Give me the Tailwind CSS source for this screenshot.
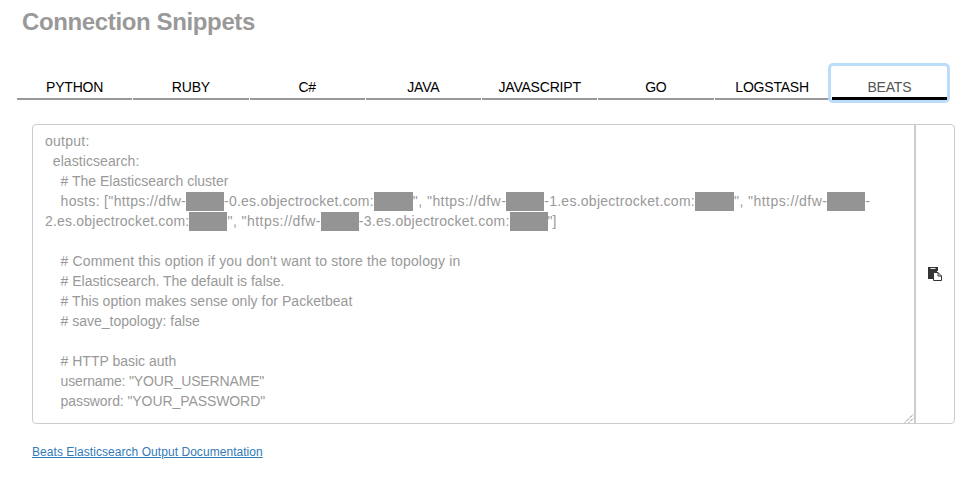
<!DOCTYPE html>
<html>
<head>
<meta charset="utf-8">
<script src="https://cdn.jsdelivr.net/npm/@tailwindcss/browser@4"></script>
</head>
<body class="bg-white font-['Liberation_Sans',Arial,sans-serif]">
<div class="w-[965px] h-[477px] overflow-hidden relative">
  <h1 class="pl-[22px] pt-[9px] h-[66px] text-[24px] leading-[26px] font-bold tracking-[-0.37px] text-[#999999]">Connection Snippets</h1>
  <div class="flex ml-[17px] w-[930px] h-[34px] mt-[-1px] text-[14px] leading-[20px] tracking-[-0.2px] text-black">
    <div class="flex-1 h-[34px] pt-[12px] text-center"><div class="border-b-2 border-[#999999] mr-px h-[23px]">PYTHON</div></div>
    <div class="flex-1 h-[34px] pt-[12px] text-center"><div class="border-b-2 border-[#999999] mr-px h-[23px]">RUBY</div></div>
    <div class="flex-1 h-[34px] pt-[12px] text-center"><div class="border-b-2 border-[#999999] mr-px h-[23px]">C#</div></div>
    <div class="flex-1 h-[34px] pt-[12px] text-center"><div class="border-b-2 border-[#999999] mr-px h-[23px]">JAVA</div></div>
    <div class="flex-1 h-[34px] pt-[12px] text-center"><div class="border-b-2 border-[#999999] mr-px h-[23px]">JAVASCRIPT</div></div>
    <div class="flex-1 h-[34px] pt-[12px] text-center"><div class="border-b-2 border-[#999999] mr-px h-[23px]">GO</div></div>
    <div class="flex-1 h-[34px] pt-[12px] text-center"><div class="border-b-2 border-[#999999] mr-px h-[23px]">LOGSTASH</div></div>
    <div class="flex-1 h-[34px] pt-[12px] text-center relative">
      <div class="absolute left-[-3px] top-[-2px] w-[122px] h-[40px] rounded-[5px] border-[3px] border-[#bcdcfb]"></div>
      <div class="relative border-b-[3px] border-black h-[23px] text-[#555555] ml-[1px]">BEATS</div>
    </div>
  </div>
  <div class="ml-[32px] mt-[25px] w-[923px] h-[300px] flex border border-[#cccccc] rounded-[4px]">
    <div class="relative w-[883px] h-full border-r-2 border-[#cccccc] pl-[12px] pr-[12px] pt-[6px] text-[14px] leading-[20px] text-[#999999] whitespace-pre-wrap"><span class="tracking-[0.25px]">output:</span>
  <span class="tracking-[0.07px]">elasticsearch:</span>
    # The Elasticsearch cluster
    <span class="tracking-[0.33px]">hosts: ["https://dfw-</span><span class="inline-block w-[38px] h-[19px] align-[-5px] bg-[#949494]"></span><span class="tracking-[0.22px]">-0.es.objectrocket.com:</span><span class="inline-block w-[39px] h-[19px] align-[-5px] bg-[#949494]"></span><span class="tracking-[0.45px]">", "https://dfw-</span><span class="inline-block w-[38px] h-[19px] align-[-5px] bg-[#949494]"></span><span class="tracking-[0.26px]">-1.es.objectrocket.com:</span><span class="inline-block w-[39px] h-[19px] align-[-5px] bg-[#949494]"></span><span class="tracking-[0.45px]">", "https://dfw-</span><span class="inline-block w-[38px] h-[19px] align-[-5px] bg-[#949494]"></span>-
<span class="tracking-[0.2px]">2.es.objectrocket.com:</span><span class="inline-block w-[38px] h-[19px] align-[-5px] bg-[#949494]"></span><span class="tracking-[0.45px]">", "https://dfw-</span><span class="inline-block w-[38px] h-[19px] align-[-5px] bg-[#949494]"></span><span class="tracking-[0.26px]">-3.es.objectrocket.com:</span><span class="inline-block w-[38px] h-[19px] align-[-5px] bg-[#949494]"></span>"]

    <span class="tracking-[0.15px]"># Comment this option if you don't want to store the topology in</span>
    # Elasticsearch. The default is false.
    <span class="tracking-[0.04px]"># This option makes sense only for Packetbeat</span>
    # save_topology: false

    # HTTP basic auth
    <span class="tracking-[-0.16px]">username: "YOUR_USERNAME"</span>
    <span class="tracking-[-0.08px]">password: "YOUR_PASSWORD"</span><svg class="absolute right-0 bottom-0 w-[10px] h-[10px]" viewBox="0 0 10 10"><path d="M1 9.5L9.5 1M5 9.5L9.5 5" stroke="#444444" stroke-width="1" stroke-dasharray="1 1" fill="none"/></svg></div>
    <div class="flex-1 flex items-center justify-center">
      <svg class="w-[14px] h-[14px]" viewBox="0 0 14 14"><path d="M0 0H10V4L9 4V5H7V12H0Z" fill="#333333"/><rect x="2.5" y="1" width="5" height="1" fill="#eeeeee"/><path d="M5.5 5.5H10L13.5 9V13.5H5.5Z" fill="#fff" stroke="#333333"/><path d="M10 5.5V9H13.5" fill="none" stroke="#333333"/></svg>
    </div>
  </div>
  <a class="block ml-[32px] mt-[20px] text-[12px] leading-[17px] tracking-[0.05px] text-[#337ab7] underline">Beats Elasticsearch Output Documentation</a>
</div>
</body>
</html>
